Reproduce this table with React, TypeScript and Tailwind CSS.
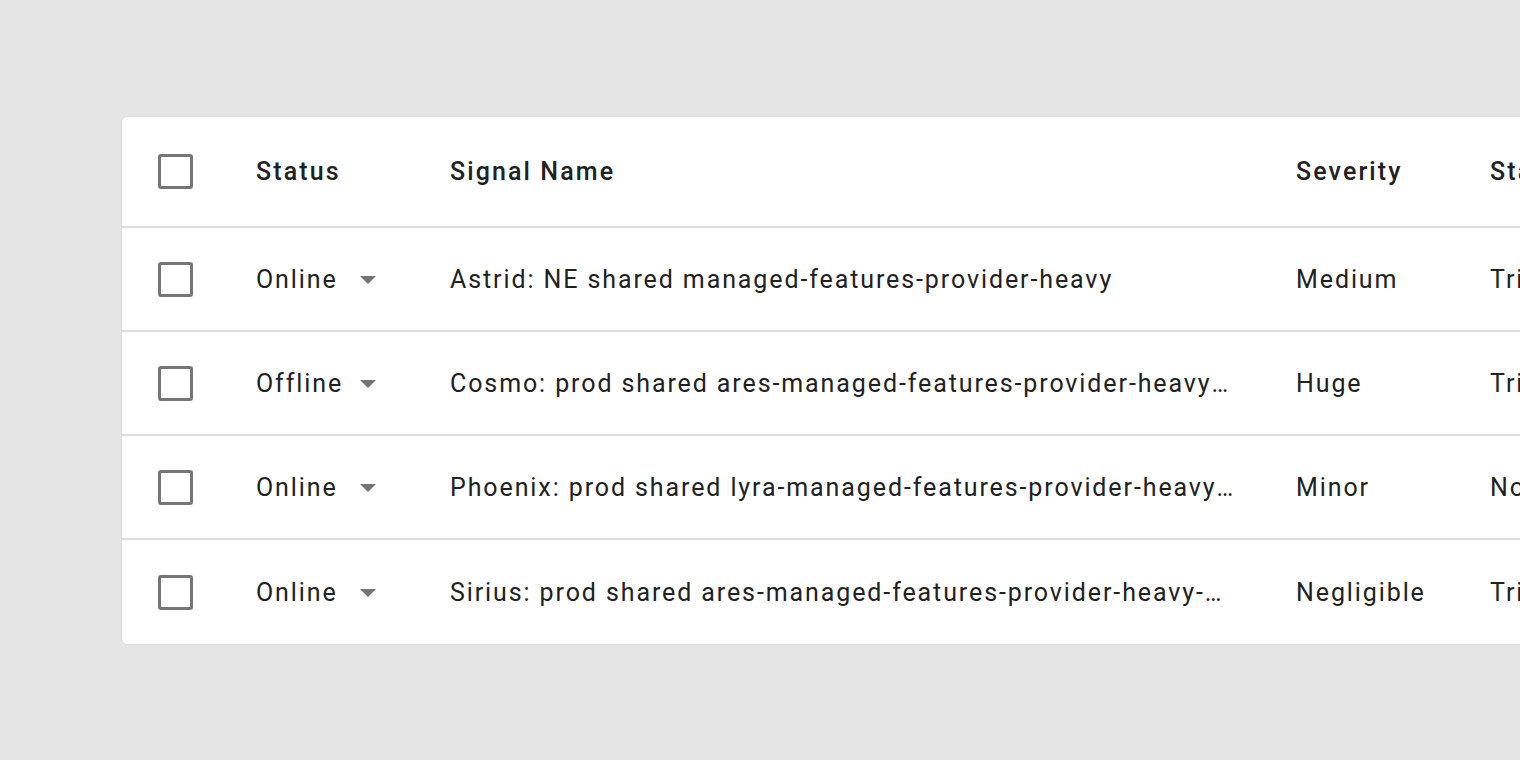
import React from "react";

interface Signal {
  status: string;
  name: string;
  severity: string;
  stage: string;
}

const rows: Signal[] = [
  { status: "Online", name: "Astrid: NE shared managed-features-provider-heavy", severity: "Medium", stage: "Triaged" },
  { status: "Offline", name: "Cosmo: prod shared ares-managed-features-provider-heavy-canary", severity: "Huge", stage: "Triaged" },
  { status: "Online", name: "Phoenix: prod shared lyra-managed-features-provider-heavy-canary", severity: "Minor", stage: "Not triaged" },
  { status: "Online", name: "Sirius: prod shared ares-managed-features-provider-heavy-canary", severity: "Negligible", stage: "Triaged" },
];

function Checkbox() {
  return <span className="block w-[35px] h-[35px] rounded-[3px] border-[3px] border-[#757575] bg-white shrink-0" />;
}

function ArrowDrop() {
  return (
    <svg width="16" height="8" viewBox="0 0 10 5" className="shrink-0">
      <path d="M0 0l5 5 5-5z" fill="#757575" />
    </svg>
  );
}

const cols = "grid grid-cols-[134px_194px_846px_194px_240px] items-center";

export default function App() {
  return (
    <div
      className="h-screen w-full overflow-hidden bg-[#e5e5e5] pt-[116px] pl-[121px]"
      style={{ fontFamily: "Roboto, 'Noto Sans', sans-serif" }}
    >
      <div className="w-[1620px] bg-white border border-[#dadada] rounded-md text-[#212121] text-[25px] tracking-[1.9px]">
        {/* Header */}
        <div className={`${cols} h-[111px] border-b-2 border-[#dcdcdc] font-medium tracking-[2.1px]`}>
          <div className="pl-[36px]">
            <Checkbox />
          </div>
          <div>Status</div>
          <div>Signal Name</div>
          <div>Severity</div>
          <div>Stage</div>
        </div>

        {rows.map((r, i) => (
          <div
            key={r.name}
            className={`${cols} h-[104px] ${i < rows.length - 1 ? "border-b-2 border-[#dcdcdc]" : ""}`}
          >
            <div className="pl-[36px]">
              <Checkbox />
            </div>
            <div className="flex items-center gap-[22px] pt-[2px]">
              <span className="w-[82px]">{r.status}</span>
              <ArrowDrop />
            </div>
            <div className="pr-[62px] pt-[2px] truncate">{r.name}</div>
            <div className="pt-[2px]">{r.severity}</div>
            <div className="pt-[2px] whitespace-nowrap">{r.stage}</div>
          </div>
        ))}
      </div>
    </div>
  );
}
